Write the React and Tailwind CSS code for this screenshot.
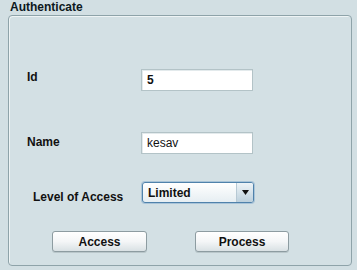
import React from 'react';

const font = { fontFamily: '"Liberation Sans", Arial, sans-serif' };

function Field({ value, bold }) {
  return (
    <div className={`w-[112px] h-[22px] bg-white border border-[#b3c3c7] shadow-[inset_1px_1px_0_#e3eaec] flex items-center pl-[5px] text-[12px] text-[#111] ${bold ? 'font-bold' : ''}`}>
      {value}
    </div>
  );
}

function Button({ children, width }) {
  return (
    <div className={`${width} h-[21px] rounded-[3px] border border-[#8d9ca1] bg-gradient-to-b from-white via-[#f4f6f7] to-[#d9e1e4] shadow-[0_1px_0_#b9c6ca] flex items-center justify-center text-[12px] font-bold text-[#111]`}>
      {children}
    </div>
  );
}

export default function App() {
  return (
    <div className="w-[357px] h-[270px] bg-[#d2dfe3] overflow-hidden select-none" style={font}>
      <div className="h-[14px] pl-[10px] text-[12px] leading-[14px] font-bold text-[#0d1820]">Authenticate</div>

      <div className="mt-[1px] ml-[8px] w-[344px] h-[251px] rounded-[4px] border border-[#8ea3a9] shadow-[inset_1px_1px_0_#eef4f5] bg-[#d3e0e4]">
        {/* Id */}
        <div className="flex items-start mt-[53px] h-[22px]">
          <div className="w-[132px] pl-[18px] mt-[1px] text-[12px] leading-[14px] font-bold text-[#111]">Id</div>
          <Field value="5" bold />
        </div>

        {/* Name */}
        <div className="flex items-start mt-[41px] h-[22px]">
          <div className="w-[132px] pl-[18px] mt-[3px] text-[12px] leading-[14px] font-bold text-[#111]">Name</div>
          <Field value="kesav" />
        </div>

        {/* Level of access */}
        <div className="flex items-start mt-[28px] h-[21px]">
          <div className="w-[133px] pl-[24px] mt-[8px] text-[12px] leading-[14px] font-bold text-[#111]">Level of Access</div>
          <div className="w-[112px] h-[21px] rounded-[3px] border border-[#4f82ab] shadow-[0_0_0_1px_#a9c4d8] bg-gradient-to-b from-white to-[#e6eef2] flex overflow-hidden">
            <div className="flex-1 flex items-center pl-[5px] text-[12px] font-bold text-[#111]">Limited</div>
            <div className="w-[17px] border-l border-[#b7c9d4] bg-gradient-to-b from-[#eef4f8] to-[#bcd0dc] flex items-center justify-center">
              <svg width="7" height="5" viewBox="0 0 7 5"><path d="M0 0h7L3.5 5z" fill="#111" /></svg>
            </div>
          </div>
        </div>

        {/* Buttons */}
        <div className="flex items-start mt-[28px] pl-[43px] gap-[48px]">
          <Button width="w-[95px]">Access</Button>
          <Button width="w-[94px]">Process</Button>
        </div>
      </div>
    </div>
  );
}
